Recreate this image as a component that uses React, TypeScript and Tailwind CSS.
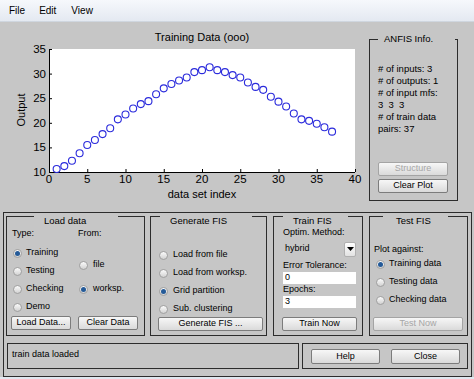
import React from 'react';

const trainData = [
  10.6, 11.2, 12.3, 13.8, 15.5, 16.5, 17.7, 18.9, 20.7, 21.7, 22.9, 23.8, 24.4,
  25.8, 27.0, 27.9, 28.6, 29.2, 30.3, 30.7, 31.3, 30.7, 30.3, 29.7, 29.2, 28.2,
  27.3, 26.7, 25.3, 24.3, 23.3, 21.9, 20.7, 20.4, 19.8, 19.1, 18.2,
];

// axes box in svg coords
const AX = { left: 49, right: 355, top: 27, bottom: 150 };
const sx = (v: number) => AX.left + (v / 40) * (AX.right - AX.left);
const sy = (v: number) => AX.bottom - ((v - 10) / 25) * (AX.bottom - AX.top);

function Plot() {
  const xTicks = [0, 5, 10, 15, 20, 25, 30, 35, 40];
  const yTicks = [10, 15, 20, 25, 30, 35];
  return (
    <svg width={365} height={190} fontFamily="Liberation Sans, Arial, sans-serif" className="shrink-0">
      <text x={202} y={15} fontSize={11} textAnchor="middle" dominantBaseline="central" fill="#000">
        Training Data (ooo)
      </text>
      <rect x={AX.left} y={AX.top} width={AX.right - AX.left} height={AX.bottom - AX.top} fill="#fff" />
      <line x1={AX.left + 0.5} y1={AX.top} x2={AX.left + 0.5} y2={AX.bottom + 0.5} stroke="#000" />
      <line x1={AX.left} y1={AX.bottom + 0.5} x2={AX.right} y2={AX.bottom + 0.5} stroke="#000" />
      {xTicks.map((t) => (
        <g key={'x' + t}>
          <line x1={sx(t) + 0.5} y1={AX.bottom} x2={sx(t) + 0.5} y2={AX.bottom - 3} stroke="#000" />
          <text x={sx(t)} y={157} fontSize={11.5} textAnchor="middle" dominantBaseline="central">
            {t}
          </text>
        </g>
      ))}
      {yTicks.map((t) => (
        <g key={'y' + t}>
          <line x1={AX.left} y1={sy(t) + 0.5} x2={AX.left + 3} y2={sy(t) + 0.5} stroke="#000" />
          <text x={46} y={sy(t)} fontSize={11.5} textAnchor="end" dominantBaseline="central">
            {t}
          </text>
        </g>
      ))}
      <text x={202} y={172} fontSize={11} textAnchor="middle" dominantBaseline="central">
        data set index
      </text>
      <text
        x={21}
        y={88}
        fontSize={11}
        textAnchor="middle"
        dominantBaseline="central"
        transform="rotate(-90 21 88)"
      >
        Output
      </text>
      {trainData.map((v, i) => (
        <circle key={i} cx={sx(i + 1)} cy={sy(v)} r={3.5} fill="none" stroke="#2b2bdc" strokeWidth={1.1} />
      ))}
    </svg>
  );
}

function Radio({ checked, label, gap = 'ml-[5px]' }: { checked?: boolean; label: string; gap?: string }) {
  return (
    <div className="flex items-center h-[18px]">
      <span className="w-[9px] h-[9px] rounded-full border border-[#a0a0a0] bg-linear-to-b from-[#fbfbfb] to-[#d2d2d2] flex items-center justify-center shrink-0">
        {checked && <span className="w-[5px] h-[5px] rounded-full bg-[#245a98]" />}
      </span>
      <span className={gap}>{label}</span>
    </div>
  );
}

function Btn({ children, className, disabled }: { children: React.ReactNode; className?: string; disabled?: boolean }) {
  return (
    <div
      className={
        'flex items-center justify-center rounded-[2px] border bg-linear-to-b from-[#f7f7f7] to-[#dadada] ' +
        (disabled ? 'border-[#a4a4a4] text-[#a6a6a6] ' : 'border-[#7c7c7c] text-black ') +
        (className ?? '')
      }
    >
      {children}
    </div>
  );
}

function PanelTitle({ children, className }: { children: React.ReactNode; className: string }) {
  return (
    <span className={'absolute bg-[#c6c6c6] leading-[11px] text-[9.5px] ' + className}>{children}</span>
  );
}

function App() {
  return (
    <div className="w-[474px] h-[379px] overflow-hidden bg-[#c6c6c6] text-[9px] text-black font-['Liberation_Sans',Arial,sans-serif]">
      {/* menu bar */}
      <div className="h-[22px] flex items-center bg-linear-to-b from-[#f6f8fc] to-[#e4e9f1] border-b border-[#cfd6df] text-[10px] pl-[9px]">
        <span>File</span>
        <span className="ml-[14px]">Edit</span>
        <span className="ml-[15px]">View</span>
      </div>

      {/* plot + info */}
      <div className="flex h-[190px]">
        <Plot />
        <div className="relative ml-[4px] mt-[17px] w-[89px] h-[162px] border border-[#2c2c2c] pl-[8px] pt-[23px]">
          <PanelTitle className="-top-[7px] left-[8px] pl-[6px] pr-[22px]">ANFIS Info.</PanelTitle>
          <div className="leading-[12px] text-[9.5px]">
            <div># of inputs: 3</div>
            <div># of outputs: 1</div>
            <div># of input mfs:</div>
            <div>3&nbsp;&nbsp;3&nbsp;&nbsp;3</div>
            <div># of train data</div>
            <div>pairs: 37</div>
          </div>
          <Btn disabled className="mt-[27px] w-[70px] h-[14px]">Structure</Btn>
          <Btn className="mt-[3px] w-[70px] h-[14px]">Clear Plot</Btn>
        </div>
      </div>

      {/* lower frame */}
      <div className="ml-[3px] w-[469px] h-[165px] border border-[#2c2c2c]">
        <div className="flex mt-[3px] ml-[2px] h-[120px]">
          {/* Load data */}
          <div className="relative w-[139px] h-[120px] border border-[#2c2c2c] pl-[5px] pt-[9px]">
            <PanelTitle className="-top-[2px] left-[27px] pl-[10px] pr-[32px]">Load data</PanelTitle>
            <div className="flex">
              <div className="w-[66px]">
                <div className="h-[16px] flex items-center">Type:</div>
                <div className="mt-[2px] pl-[1px]">
                  <Radio checked label="Training" gap="ml-[4px]" />
                  <Radio label="Testing" gap="ml-[4px]" />
                  <Radio label="Checking" gap="ml-[4px]" />
                  <Radio label="Demo" gap="ml-[4px]" />
                </div>
              </div>
              <div>
                <div className="h-[16px] flex items-center">From:</div>
                <div className="mt-[14px] pl-[1px]">
                  <Radio label="file" />
                </div>
                <div className="mt-[6px] pl-[1px]">
                  <Radio checked label="worksp." />
                </div>
              </div>
            </div>
            <div className="flex -ml-[1px]">
              <Btn className="w-[60px] h-[14px]">Load Data...</Btn>
              <Btn className="ml-[7px] w-[60px] h-[14px]">Clear Data</Btn>
            </div>
          </div>

          {/* Generate FIS */}
          <div className="relative ml-[5px] w-[117px] h-[120px] border border-[#2c2c2c] pl-[8px] pt-[29px]">
            <PanelTitle className="-top-[2px] left-[9px] pl-[10px] pr-[25px]">Generate FIS</PanelTitle>
            <Radio label="Load from file" />
            <Radio label="Load from worksp." />
            <Radio checked label="Grid partition" />
            <Radio label="Sub. clustering" />
            <Btn className="-mt-[1px] -ml-[1px] w-[105px] h-[14px]">Generate FIS ...</Btn>
          </div>

          {/* Train FIS */}
          <div className="relative ml-[6px] w-[90px] h-[120px] border border-[#2c2c2c] pl-[9px] pt-[9px]">
            <PanelTitle className="-top-[2px] left-[9px] pl-[10px] pr-[16px]">Train FIS</PanelTitle>
            <div className="leading-[12px]">Optim. Method:</div>
            <div className="mt-[3px] w-[73px] h-[16px] flex items-center justify-between">
              <span className="pl-[2px]">hybrid</span>
              <span className="w-[12px] h-[15px] rounded-[2px] border border-[#b0b0b0] bg-linear-to-b from-[#ffffff] to-[#e2e2e2] flex items-center justify-center">
                <svg width="7" height="4" viewBox="0 0 7 4">
                  <path d="M0 0 H7 L3.5 4 Z" fill="#000" />
                </svg>
              </span>
            </div>
            <div className="mt-[2px] leading-[12px]">Error Tolerance:</div>
            <div className="mt-[1px] w-[73px] h-[12px] bg-white flex items-center pl-[2px]">0</div>
            <div className="leading-[10px] mt-0">Epochs:</div>
            <div className="mt-[2px] w-[73px] h-[12px] bg-white flex items-center pl-[2px]">3</div>
            <Btn className="mt-[9px] -ml-[1px] w-[75px] h-[14px]">Train Now</Btn>
          </div>

          {/* Test FIS */}
          <div className="relative ml-[6px] w-[99px] h-[120px] border border-[#2c2c2c] pl-[4px] pt-[26px]">
            <PanelTitle className="-top-[2px] left-[13px] pl-[13px] pr-[17px]">Test FIS</PanelTitle>
            <div className="leading-[12px]">Plot against:</div>
            <div className="pl-[2px]">
              <Radio checked label="Training data" gap="ml-[4px]" />
              <Radio label="Testing data" gap="ml-[4px]" />
              <Radio label="Checking data" gap="ml-[4px]" />
            </div>
            <Btn disabled className="mt-[8px] -ml-[1px] w-[90px] h-[14px]">Test Now</Btn>
          </div>
        </div>

        {/* status row */}
        <div className="flex mt-[7px] ml-[3px]">
          <div className="w-[292px] h-[26px] border border-[#2c2c2c] pl-[4px] pt-[4px] leading-[12px]">
            train data loaded
          </div>
          <div className="ml-[3px] w-[166px] h-[26px] border border-[#2c2c2c] pl-[8px] pt-[5px] flex">
            <Btn className="w-[69px] h-[15px]">Help</Btn>
            <Btn className="ml-[11px] w-[69px] h-[15px]">Close</Btn>
          </div>
        </div>
      </div>
      <div className="h-[2px] bg-[#e0e7ef]" />
    </div>
  );
}

export default App;
